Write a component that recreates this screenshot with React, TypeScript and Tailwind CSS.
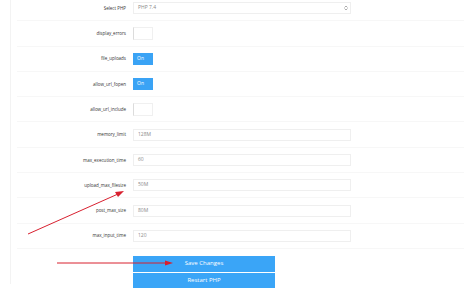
import type { ReactNode } from "react";

type Field =
  | { label: string; kind: "select"; value: string }
  | { label: string; kind: "toggle"; on: boolean }
  | { label: string; kind: "text"; value: string };

const fields: Field[] = [
  { label: "Select PHP", kind: "select", value: "PHP 7.4" },
  { label: "display_errors", kind: "toggle", on: false },
  { label: "file_uploads", kind: "toggle", on: true },
  { label: "allow_url_fopen", kind: "toggle", on: true },
  { label: "allow_url_include", kind: "toggle", on: false },
  { label: "memory_limit", kind: "text", value: "128M" },
  { label: "max_execution_time", kind: "text", value: "60" },
  { label: "upload_max_filesize", kind: "text", value: "50M" },
  { label: "post_max_size", kind: "text", value: "80M" },
  { label: "max_input_time", kind: "text", value: "120" },
];

function FieldControl({ field }: { field: Field }): ReactNode {
  if (field.kind === "toggle") {
    return field.on ? (
      <div className="flex h-[12px] w-[20px] items-center bg-[#3aa3f5] pl-[4px] text-[5px] text-white">
        On
      </div>
    ) : (
      <div className="h-[13px] w-[20px] border border-l-[#dcdcdc] border-[#f0f0f0] bg-white" />
    );
  }

  return (
    <div className="flex h-[12px] w-[218px] items-center justify-between border border-[#efefef] bg-white pl-[4px] pr-[2px] text-[5px] text-[#8a8a8a]">
      <span>{field.value}</span>
      {field.kind === "select" && (
        <svg width="4" height="6" viewBox="0 0 4 6" className="text-[#888]">
          <path d="M0.5 2.5 L2 1 L3.5 2.5 M0.5 3.5 L2 5 L3.5 3.5" fill="none" stroke="currentColor" strokeWidth="0.7" />
        </svg>
      )}
    </div>
  );
}

export default function App() {
  return (
    <div
      className="relative h-[288px] w-[474px] overflow-hidden bg-white"
      style={{ fontFamily: '"Open Sans", "Noto Sans", sans-serif' }}
    >
      <div className="ml-[10px] h-full border-l border-[#f3f3f3]">
        <div className="-mt-[4px] ml-[6px] mr-[10px]">
          {fields.map((field) => (
            <div
              key={field.label}
              className="flex h-[25.3px] items-center border-b border-[#f7f7f7]"
            >
              <span className="w-[110px] pr-[1px] text-right text-[4.5px] text-[#333]">
                {field.label}
              </span>
              <div className="ml-[6px]">
                <FieldControl field={field} />
              </div>
            </div>
          ))}
        </div>

        <div className="ml-[122px] mt-[7px] flex w-[142px] flex-col gap-[1px]">
          <button
            type="button"
            className="flex h-[16px] items-center justify-center bg-[#3aa5f7] text-[6px] text-white"
          >
            Save Changes
          </button>
          <button
            type="button"
            className="flex h-[16px] items-center justify-center bg-[#3aa5f7] text-[6px] text-white"
          >
            Restart PHP
          </button>
        </div>
      </div>

      <svg
        className="pointer-events-none absolute left-0 top-0"
        width="474"
        height="288"
        viewBox="0 0 474 288"
      >
        <line x1="28" y1="234" x2="118" y2="194" stroke="#d8202f" strokeWidth="1" />
        <polygon points="124,191 115,192 118,197" fill="#d8202f" />
        <line x1="57" y1="263" x2="166" y2="263" stroke="#d8202f" strokeWidth="1" />
        <polygon points="173,263 165,260.5 165,265.5" fill="#d8202f" />
      </svg>
    </div>
  );
}
